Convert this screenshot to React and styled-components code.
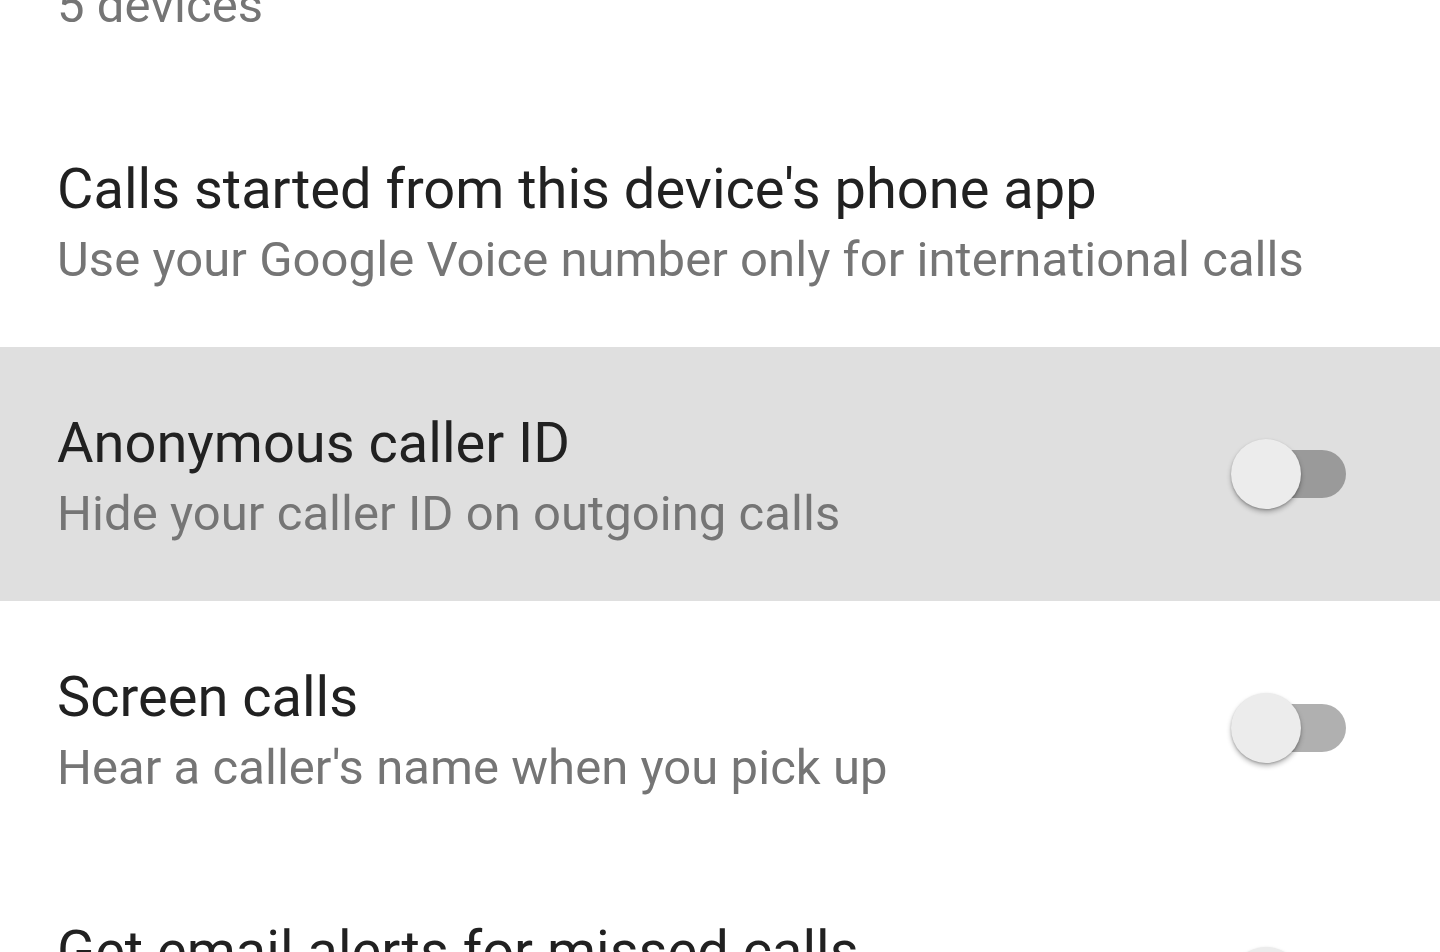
import React, { useState } from 'react';
import styled, { createGlobalStyle } from 'styled-components';

const GlobalStyle = createGlobalStyle`
  html, body {
    margin: 0;
    padding: 0;
    background: #ffffff;
  }
  body {
    font-family: Roboto, "Noto Sans", "Liberation Sans", sans-serif;
    -webkit-font-smoothing: antialiased;
  }
`;

// Scroll viewport: the list is scrolled so the first row is mostly out of view
const Screen = styled.div`
  height: 952px;
  overflow: hidden;
  background: #ffffff;
`;

const List = styled.div`
  display: flex;
  flex-direction: column;
  margin-top: -161px;
`;

const Row = styled.div`
  display: flex;
  align-items: center;
  height: 254px;
  padding: 0 94px 0 57px;
  box-sizing: border-box;
  background: ${(p) => (p.$pressed ? '#dfdfdf' : 'transparent')};
`;

const Text = styled.div`
  flex: 1;
  align-self: stretch;
  display: flex;
  flex-direction: column;
  padding-top: 63px;
  min-width: 0;
`;

const Title = styled.div`
  font-size: 56px;
  line-height: 67px;
  color: #212121;
  white-space: nowrap;
`;

const Summary = styled.div`
  margin-top: 7px;
  font-size: 49px;
  line-height: 59px;
  letter-spacing: 0.05px;
  color: #757575;
  white-space: nowrap;
`;

const SwitchWrap = styled.button`
  position: relative;
  width: 115px;
  height: 70px;
  padding: 0;
  border: none;
  background: none;
  cursor: pointer;
  flex-shrink: 0;
`;

const Track = styled.span`
  position: absolute;
  right: 0;
  top: 11px;
  width: 96px;
  height: 48px;
  border-radius: 24px;
  background: ${(p) => (p.$on ? 'rgba(0, 150, 136, 0.5)' : 'rgba(0, 0, 0, 0.31)')};
`;

const Thumb = styled.span`
  position: absolute;
  top: 0;
  left: ${(p) => (p.$on ? '45px' : '0')};
  width: 70px;
  height: 70px;
  border-radius: 50%;
  background: ${(p) => (p.$on ? '#009688' : '#ececec')};
  box-shadow: 0 3px 5px rgba(0, 0, 0, 0.28), 0 1px 2px rgba(0, 0, 0, 0.18);
  transition: left 0.15s ease;
`;

const Switch = ({ on, onToggle }) => (
  <SwitchWrap onClick={onToggle} aria-pressed={on}>
    <Track $on={on} />
    <Thumb $on={on} />
  </SwitchWrap>
);

const rows = [
  { id: 'devices', title: 'Incoming calls', summary: '5 devices' },
  {
    id: 'phone-app',
    title: "Calls started from this device's phone app",
    summary: 'Use your Google Voice number only for international calls',
  },
  {
    id: 'anonymous',
    title: 'Anonymous caller ID',
    summary: 'Hide your caller ID on outgoing calls',
    toggle: true,
    pressed: true,
  },
  {
    id: 'screen',
    title: 'Screen calls',
    summary: "Hear a caller's name when you pick up",
    toggle: true,
  },
  {
    id: 'email',
    title: 'Get email alerts for missed calls',
    summary: 'Send an email when you miss a call',
    toggle: true,
  },
];

export default function App() {
  const [switches, setSwitches] = useState({});

  const flip = (id) => setSwitches((s) => ({ ...s, [id]: !s[id] }));

  return (
    <>
      <GlobalStyle />
      <Screen>
        <List>
          {rows.map((row) => (
            <Row key={row.id} $pressed={row.pressed}>
              <Text>
                <Title>{row.title}</Title>
                <Summary>{row.summary}</Summary>
              </Text>
              {row.toggle && <Switch on={!!switches[row.id]} onToggle={() => flip(row.id)} />}
            </Row>
          ))}
        </List>
      </Screen>
    </>
  );
}
